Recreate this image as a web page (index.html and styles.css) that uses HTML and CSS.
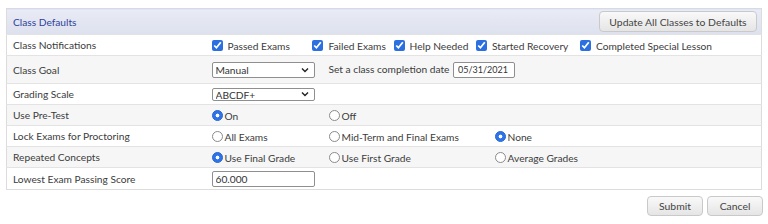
FILE: index.html
```html
<!DOCTYPE html>
<html lang="en">
<head>
    <meta charset="UTF-8">
    <title>Class Defaults</title>
    <link rel="stylesheet" href="styles.css">
</head>
<body>
    <form class="defaults-form">
        <table class="defaults">
            <colgroup>
                <col class="col-label">
                <col class="col-a">
                <col class="col-b">
                <col>
            </colgroup>
            <tr class="head">
                <th colspan="3">Class Defaults</th>
                <th class="head-action"><button type="button" class="btn">Update All Classes to Defaults</button></th>
            </tr>
            <tr>
                <td>Class Notifications</td>
                <td colspan="3" class="checks">
                    <label class="chk-passed"><input type="checkbox" checked>Passed Exams</label>
                    <label class="chk-failed"><input type="checkbox" checked>Failed Exams</label>
                    <label class="chk-help"><input type="checkbox" checked>Help Needed</label>
                    <label class="chk-started"><input type="checkbox" checked>Started Recovery</label>
                    <label><input type="checkbox" checked>Completed Special Lesson</label>
                </td>
            </tr>
            <tr class="alt tall">
                <td>Class Goal</td>
                <td>
                    <select class="field">
                        <option>Manual</option>
                    </select>
                </td>
                <td colspan="2">Set a class completion date <input type="text" class="date" value="05/31/2021"></td>
            </tr>
            <tr>
                <td>Grading Scale</td>
                <td>
                    <select class="field small">
                        <option>ABCDF+</option>
                    </select>
                </td>
                <td colspan="2"></td>
            </tr>
            <tr class="alt">
                <td>Use Pre-Test</td>
                <td><label><input type="radio" name="pretest" checked>On</label></td>
                <td colspan="2"><label><input type="radio" name="pretest">Off</label></td>
            </tr>
            <tr>
                <td>Lock Exams for Proctoring</td>
                <td><label><input type="radio" name="lock">All Exams</label></td>
                <td><label><input type="radio" name="lock">Mid-Term and Final Exams</label></td>
                <td><label><input type="radio" name="lock" checked>None</label></td>
            </tr>
            <tr class="alt">
                <td>Repeated Concepts</td>
                <td><label><input type="radio" name="repeat" checked>Use Final Grade</label></td>
                <td><label><input type="radio" name="repeat">Use First Grade</label></td>
                <td><label><input type="radio" name="repeat">Average Grades</label></td>
            </tr>
            <tr class="last">
                <td>Lowest Exam Passing Score</td>
                <td><input type="text" class="field" value="60.000"></td>
                <td colspan="2"></td>
            </tr>
        </table>

        <div class="actions">
            <button type="submit" class="btn">Submit</button>
            <button type="button" class="btn">Cancel</button>
        </div>
    </form>
</body>
</html>
```

FILE: styles.css
```css
* {
    box-sizing: border-box;
}

body {
    margin: 0;
    padding: 8px 6px 0 6px;
    font-family: Lato, "Noto Sans", sans-serif;
    font-size: 10.2px;
    color: #3c3c3c;
    background: #fff;
}

.defaults-form {
    width: 756px;
}

.defaults {
    width: 756px;
    border-collapse: collapse;
    border: 1px solid #dcdcdc;
    table-layout: fixed;
}

.col-label {
    width: 199px;
}

.col-a {
    width: 117px;
}

.col-b {
    width: 166px;
}

.defaults td,
.defaults th {
    height: 21px;
    padding: 0 6px;
    border-top: 1px solid #e3e3e3;
    text-align: left;
    font-weight: normal;
    white-space: nowrap;
}

.defaults .head th {
    height: 26px;
    background: linear-gradient(#e9ebf5, #dde1ee);
    border-top: 1px solid #d6d9e6;
    color: #2f3f9c;
}

.defaults .head .head-action {
    text-align: right;
    padding-right: 4px;
}

.defaults .alt td {
    background: #f6f6f6;
}

.defaults .tall td {
    height: 28px;
}

.defaults .last td {
    height: 22px;
}

.checks label {
    margin-right: 5px;
}

.checks .chk-passed {
    margin-right: 20px;
}

.checks .chk-started {
    margin-right: 9px;
}

label {
    display: inline-flex;
    align-items: center;
    vertical-align: middle;
}

input[type="checkbox"] {
    width: 11px;
    height: 11px;
    margin: 0 5px 0 0;
    accent-color: #2b6fe0;
}

input[type="radio"] {
    appearance: none;
    width: 11px;
    height: 11px;
    margin: 0 2px 0 0;
    border: 1px solid #8a8a8a;
    border-radius: 50%;
    background: #fff;
}

input[type="radio"]:checked {
    border-color: #2a66d6;
    background: radial-gradient(circle, #fff 0 1.6px, #2f74e6 2.2px);
}

.field {
    width: 103px;
    height: 16px;
    padding: 0 3px;
    font: inherit;
    color: #333;
    border: 1px solid #8f8f8f;
    border-radius: 2px;
    background: #fff;
    vertical-align: middle;
}

.field.small {
    height: 13px;
}

select.field {
    appearance: none;
    background: #fff url("data:image/svg+xml,%3Csvg xmlns='http://www.w3.org/2000/svg' width='8' height='6'%3E%3Cpath d='M1 1.5l3 3 3-3' fill='none' stroke='%23222' stroke-width='1.4'/%3E%3C/svg%3E") no-repeat right 5px center;
}

.date {
    width: 62px;
    height: 16px;
    margin-left: 1px;
    padding: 0 2px 0 4px;
    font: inherit;
    font-size: 9px;
    color: #333;
    border: 1px solid #8f8f8f;
    border-radius: 2px;
    vertical-align: middle;
}

.btn {
    height: 21px;
    padding: 0 11px;
    font: inherit;
    font-size: 10.4px;
    color: #444;
    border: 1px solid #c9c9c9;
    border-radius: 4px;
    background: linear-gradient(#f9f9f9, #e5e5e5);
}

.defaults .head .btn {
    width: 158px;
    padding: 0;
}

.actions {
    display: flex;
    justify-content: flex-end;
    gap: 4px;
    margin-top: 6px;
    margin-right: -1px;
}

.actions .btn {
    width: 56px;
    height: 20px;
    padding: 0;
}
```
